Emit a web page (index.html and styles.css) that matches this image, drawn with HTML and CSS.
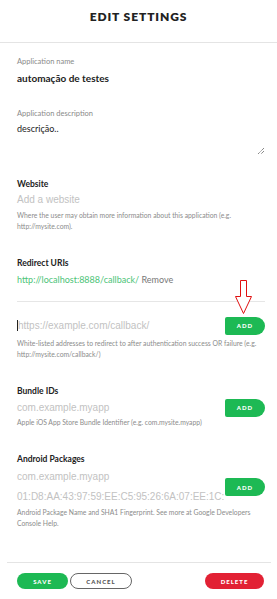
FILE: index.html
```html
<!DOCTYPE html>
<html>
<head>
<meta charset="utf-8">
<link rel="stylesheet" href="styles.css">
</head>
<body>
<div class="page">
  <header class="header"><h1 class="title">EDIT SETTINGS</h1></header>
  <main class="content">
    <section class="field first">
      <div class="label-light">Application name</div>
      <div class="value">automação de testes</div>
    </section>
    <section class="field desc">
      <div class="label-light">Application description</div>
      <div class="textarea">
        <span class="desc-text">descrição..</span>
        <svg class="grip" width="8" height="8" viewBox="0 0 8 8"><path d="M7 1 L1 7 M7 4 L4 7" stroke="#444" stroke-width="0.9" stroke-dasharray="1 0.8" fill="none"/></svg>
      </div>
    </section>
    <section class="field website">
      <div class="label">Website</div>
      <div class="placeholder">Add a website</div>
      <p class="help">Where the user may obtain more information about this application (e.g. http://mysite.com).</p>
    </section>
    <section class="field redirect">
      <div class="label">Redirect URIs</div>
      <div class="uri"><span class="uri-link">http://localhost:8888/callback/</span> <span class="remove">Remove</span></div>
      <div class="sep"></div>
      <div class="row">
        <div class="input"><span class="caret"></span><span class="placeholder inline">https://example.com/callback/</span></div>
        <button class="add">ADD</button>
      </div>
      <p class="help">White-listed addresses to redirect to after authentication success OR failure (e.g. http://mysite.com/callback/)</p>
      <svg class="arrow" width="21" height="35" viewBox="0 0 21 35"><path d="M7.5 0.5 H13.5 V16.5 H18.5 L10.5 33.5 L2.5 16.5 H7.5 Z" fill="#fff" stroke="#e01010" stroke-width="1"/></svg>
    </section>
    <section class="field bundle">
      <div class="label">Bundle IDs</div>
      <div class="row">
        <div class="input"><span class="placeholder inline">com.example.myapp</span></div>
        <button class="add">ADD</button>
      </div>
      <p class="help tight">Apple iOS App Store Bundle Identifier (e.g. com.mysite.myapp)</p>
    </section>
    <section class="field android">
      <div class="label">Android Packages</div>
      <div class="row">
        <div class="inputs">
          <div class="placeholder tall">com.example.myapp</div>
          <div class="placeholder tall">01:D8:AA:43:97:59:EE:C5:95:26:6A:07:EE:1C:</div>
        </div>
        <button class="add">ADD</button>
      </div>
      <p class="help tight">Android Package Name and SHA1 Fingerprint. See more at Google Developers Console Help.</p>
    </section>
  </main>
  <footer class="footer">
    <button class="btn save">SAVE</button>
    <button class="btn cancel">CANCEL</button>
    <button class="btn delete">DELETE</button>
  </footer>
</div>
</body>
</html>
```
FILE: styles.css
```css
* { box-sizing: border-box; }
html, body { margin: 0; padding: 0; background: #fff; }
body { font-family: Lato, "Noto Sans", sans-serif; color: #222; width: 277px; }
.page { width: 277px; }
.header {
  height: 43px;
  border-bottom: 1px solid #e4e4e4;
  display: flex;
  justify-content: center;
  padding-top: 10px;
}
.title {
  margin: 0;
  font-size: 12px;
  line-height: 14px;
  font-weight: 800;
  letter-spacing: 0.9px;
  color: #222;
}
.content { padding: 0 12px 0 17px; }
.field { position: relative; }
.first { padding-top: 13px; }
.label-light { font-size: 7.5px; line-height: 11px; color: #8a8a8a; }
.value { margin-top: 4px; font-size: 10px; line-height: 14px; font-weight: 700; color: #222; }
.desc { margin-top: 23px; }
.textarea { position: relative; height: 36px; margin-top: 3px; }
.desc-text { font-size: 9px; line-height: 14px; color: #222; display: block; }
.grip { position: absolute; right: 0; bottom: 3px; }
.website { margin-top: 21px; }
.label { font-size: 8.5px; line-height: 11px; font-weight: 700; color: #222; }
.placeholder {
  font-family: "Liberation Sans", Arial, sans-serif;
  font-size: 10px; line-height: 15px; color: #c2c2c2; margin-top: 2px; white-space: nowrap;
}
.placeholder.inline { margin-top: 0; }
.help { margin: 3px 0 0; font-size: 6.8px; line-height: 11px; color: #8c8c8c; }
.help.tight { margin-top: 0; }
.redirect { margin-top: 26px; }
.uri { margin-top: 5px; font-size: 9px; line-height: 12px; }
.uri-link { color: #4cc477; }
.remove { color: #777; }
.sep { height: 1px; background: #e6e6e6; margin-top: 15px; }
.row { display: flex; align-items: center; justify-content: space-between; margin-top: 14px; }
.input { display: flex; align-items: center; height: 19px; }
.inputs { min-width: 0; }
.caret { width: 1px; height: 11px; background: #222; }
.add {
  width: 40px; height: 18px; flex: none;
  border: none; border-radius: 2px 9px 9px 2px;
  background: #1db954; color: #fff;
  font-family: Lato, sans-serif;
  font-size: 6px; font-weight: 900; letter-spacing: 1px;
  padding: 0;
}
.arrow { position: absolute; right: 11px; top: 22px; }
.bundle { margin-top: 26px; }
.bundle .row { margin-top: 1px; }
.android { margin-top: 26px; }
.android .row { margin-top: 2px; }
.placeholder.tall { line-height: 20px; margin-top: 0; }
.footer {
  margin: 33px 6px 0 7px;
  border-top: 1px solid #e4e4e4;
  display: flex;
  align-items: center;
  padding: 10px 7px 0 10px;
}
.btn {
  height: 16px; border-radius: 8px; border: none; padding: 0;
  font-family: Lato, sans-serif; font-size: 6px; font-weight: 900; letter-spacing: 1px;
  color: #fff;
}
.save { width: 51px; background: #1db954; }
.cancel { width: 62px; margin-left: 2px; background: #fff; border: 1.2px solid #666; color: #555; }
.delete { width: 59px; margin-left: auto; background: #e22134; }
```
